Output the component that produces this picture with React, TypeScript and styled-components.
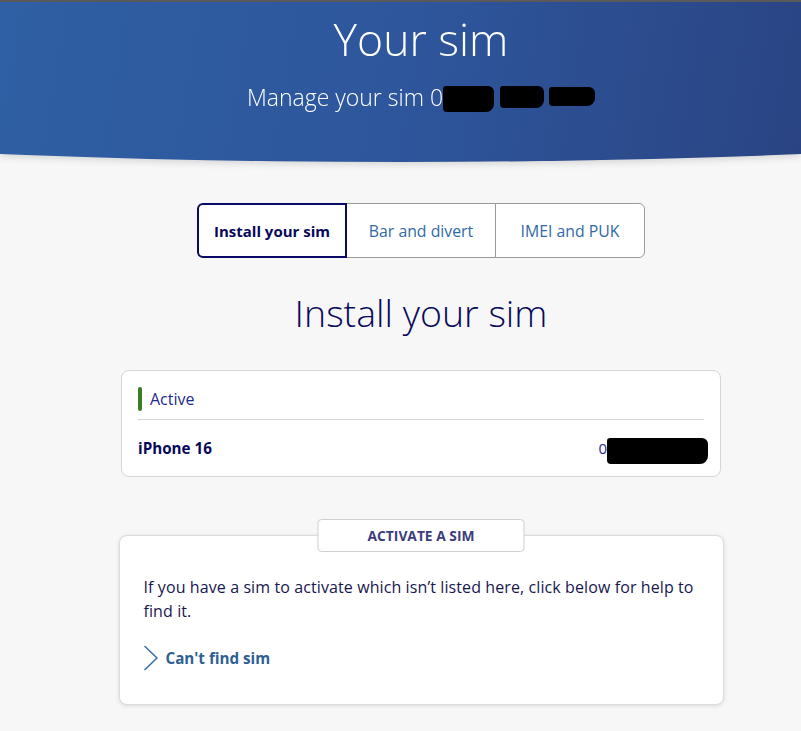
import { ReactElement, useState } from 'react';
import styled, { createGlobalStyle } from 'styled-components';

const GlobalStyle = createGlobalStyle`
  html, body {
    margin: 0;
    padding: 0;
    background: #f7f7f7;
  }
  body {
    font-family: 'Open Sans', 'Noto Sans', Arial, sans-serif;
  }
`;

const TABS = ['Install your sim', 'Bar and divert', 'IMEI and PUK'];

// the layout column sits a little right of the window centre
const COLUMN_OFFSET = 41;

const App = (): ReactElement => {
  const [activeTab, setActiveTab] = useState<number>(0);

  return (
    <>
      <GlobalStyle />
      <Page>
        <HeroShadow>
          <Hero>
            <HeroTitle>Your sim</HeroTitle>
            <HeroSubtitle>
              Manage your sim 0
              <Redacted $w={51} $h={26} $shift={2} />
              <Redacted $w={44} $h={22} $shift={0} $gap={6} />
              <Redacted $w={46} $h={19} $shift={-1} $gap={5} />
            </HeroSubtitle>
          </Hero>
        </HeroShadow>

        <Main>
          <TabBar>
            {TABS.map((label, i) => (
              <Tab
                key={label}
                $active={i === activeTab}
                onClick={(): void => setActiveTab(i)}
              >
                {label}
              </Tab>
            ))}
          </TabBar>

          <PageHeading>Install your sim</PageHeading>

          <SimCard>
            <StatusRow>
              <StatusBar />
              <StatusText>Active</StatusText>
            </StatusRow>
            <DeviceRow>
              <DeviceName>iPhone 16</DeviceName>
              <DeviceNumber>
                0
                <Redacted $w={101} $h={26} $shift={3} $gap={0} />
              </DeviceNumber>
            </DeviceRow>
          </SimCard>

          <ActivatePanel>
            <PanelLabel>Activate a sim</PanelLabel>
            <PanelText>
              If you have a sim to activate which isn’t listed here, click below
              for help to find it.
            </PanelText>
            <ChevronLink href="#">
              <svg width="15" height="26" viewBox="0 0 15 26" fill="none">
                <path
                  d="M1 1.5 L13 13 L1 24.5"
                  stroke="#3a6ea6"
                  strokeWidth="1.6"
                  strokeLinecap="round"
                  strokeLinejoin="round"
                />
              </svg>
              Can&apos;t find sim
            </ChevronLink>
          </ActivatePanel>
        </Main>
      </Page>
    </>
  );
};

const Page = styled.div`
  border-top: 2px solid #5b5b5b;
  padding-bottom: 40px;
`;

const HeroShadow = styled.div`
  filter: drop-shadow(0 3px 3px rgba(0, 0, 0, 0.12));
`;

const Hero = styled.header`
  height: 160px;
  box-sizing: border-box;
  padding: 8px 0 0 ${COLUMN_OFFSET}px;
  display: flex;
  flex-direction: column;
  align-items: center;
  background: linear-gradient(100deg, #2f5fa4 0%, #2e569c 50%, #2a4483 100%);
  clip-path: ellipse(1290px 160px at 50% 0);
  color: #fff;
`;

const HeroTitle = styled.h1`
  margin: 0;
  font-size: 44.5px;
  font-weight: 300;
  line-height: 58px;
`;

const HeroSubtitle = styled.p`
  margin: 14px 0 0;
  font-size: 23px;
  font-weight: 300;
  line-height: 30px;
  display: flex;
  align-items: center;
`;

const Redacted = styled.span<{ $w: number; $h: number; $shift: number; $gap?: number }>`
  display: inline-block;
  width: ${({ $w }): number => $w}px;
  height: ${({ $h }): number => $h}px;
  margin-left: ${({ $gap }): number => $gap ?? 0}px;
  transform: translateY(${({ $shift }): number => $shift}px);
  background: #000;
  border-radius: 3px 6px 8px 4px;
`;

const Main = styled.main`
  display: flex;
  flex-direction: column;
  align-items: center;
  padding: 41px 0 0 ${COLUMN_OFFSET}px;
`;

const TabBar = styled.nav`
  display: flex;
  background: #fff;
  border-radius: 6px;
`;

const Tab = styled.button<{ $active: boolean }>`
  flex: 0 0 150px;
  height: 55px;
  padding: 0;
  margin-left: -1px;
  font-family: inherit;
  font-size: ${({ $active }): string => ($active ? '15px' : '15.8px')};
  font-weight: ${({ $active }): number => ($active ? 700 : 400)};
  color: ${({ $active }): string => ($active ? '#07075a' : '#2f6aa7')};
  background: #fff;
  border: ${({ $active }): string => ($active ? '2px solid #0a0a66' : '1px solid #9a9a9a')};
  border-radius: 0;
  position: relative;
  z-index: ${({ $active }): number => ($active ? 1 : 0)};
  cursor: pointer;

  &:first-child {
    margin-left: 0;
    border-radius: 6px 0 0 6px;
  }
  &:last-child {
    border-radius: 0 6px 6px 0;
  }
`;

const PageHeading = styled.h2`
  margin: 32px 0 0;
  font-size: 37.5px;
  font-weight: 300;
  line-height: 46px;
  color: #0a0a5c;
`;

const SimCard = styled.section`
  width: 600px;
  box-sizing: border-box;
  margin-top: 34px;
  padding: 16px 16px 0;
  background: #fff;
  border: 1px solid #d6d6d6;
  border-radius: 8px;
`;

const StatusRow = styled.div`
  display: flex;
  align-items: center;
  gap: 8px;
  height: 24px;
  padding-bottom: 8px;
  border-bottom: 1px solid #d2d2d2;
`;

const StatusBar = styled.span`
  width: 4px;
  height: 24px;
  border-radius: 2px;
  background: #3b7d1f;
`;

const StatusText = styled.span`
  font-size: 16px;
  color: #1c2b8c;
`;

const DeviceRow = styled.div`
  display: flex;
  justify-content: space-between;
  align-items: center;
  height: 56px;
`;

const DeviceName = styled.span`
  font-size: 15.2px;
  font-weight: 700;
  color: #07075a;
`;

const DeviceNumber = styled.span`
  display: flex;
  align-items: center;
  font-size: 15px;
  color: #1c2b8c;
  margin-right: -4px;
`;

const ActivatePanel = styled.section`
  position: relative;
  width: 605px;
  box-sizing: border-box;
  margin-top: 58px;
  padding: 39px 24px 28px;
  background: #fff;
  border: 1px solid #dcdcdc;
  border-radius: 8px;
  box-shadow: 0 1px 4px rgba(0, 0, 0, 0.12);
`;

const PanelLabel = styled.div`
  position: absolute;
  top: -17px;
  left: 50%;
  transform: translateX(-50%);
  width: 207px;
  height: 33px;
  box-sizing: border-box;
  display: flex;
  align-items: center;
  justify-content: center;
  background: #fff;
  border: 1px solid #cfcfcf;
  border-radius: 4px;
  font-size: 13.8px;
  font-weight: 700;
  text-transform: uppercase;
  color: #3d3d7c;
`;

const PanelText = styled.p`
  margin: 0;
  font-size: 16px;
  letter-spacing: 0.1px;
  line-height: 24px;
  color: #17174f;
`;

const ChevronLink = styled.a`
  display: inline-flex;
  align-items: center;
  gap: 7px;
  margin-top: 22px;
  font-size: 15.2px;
  font-weight: 700;
  color: #2e5f92;
  text-decoration: none;
`;

export default App;
